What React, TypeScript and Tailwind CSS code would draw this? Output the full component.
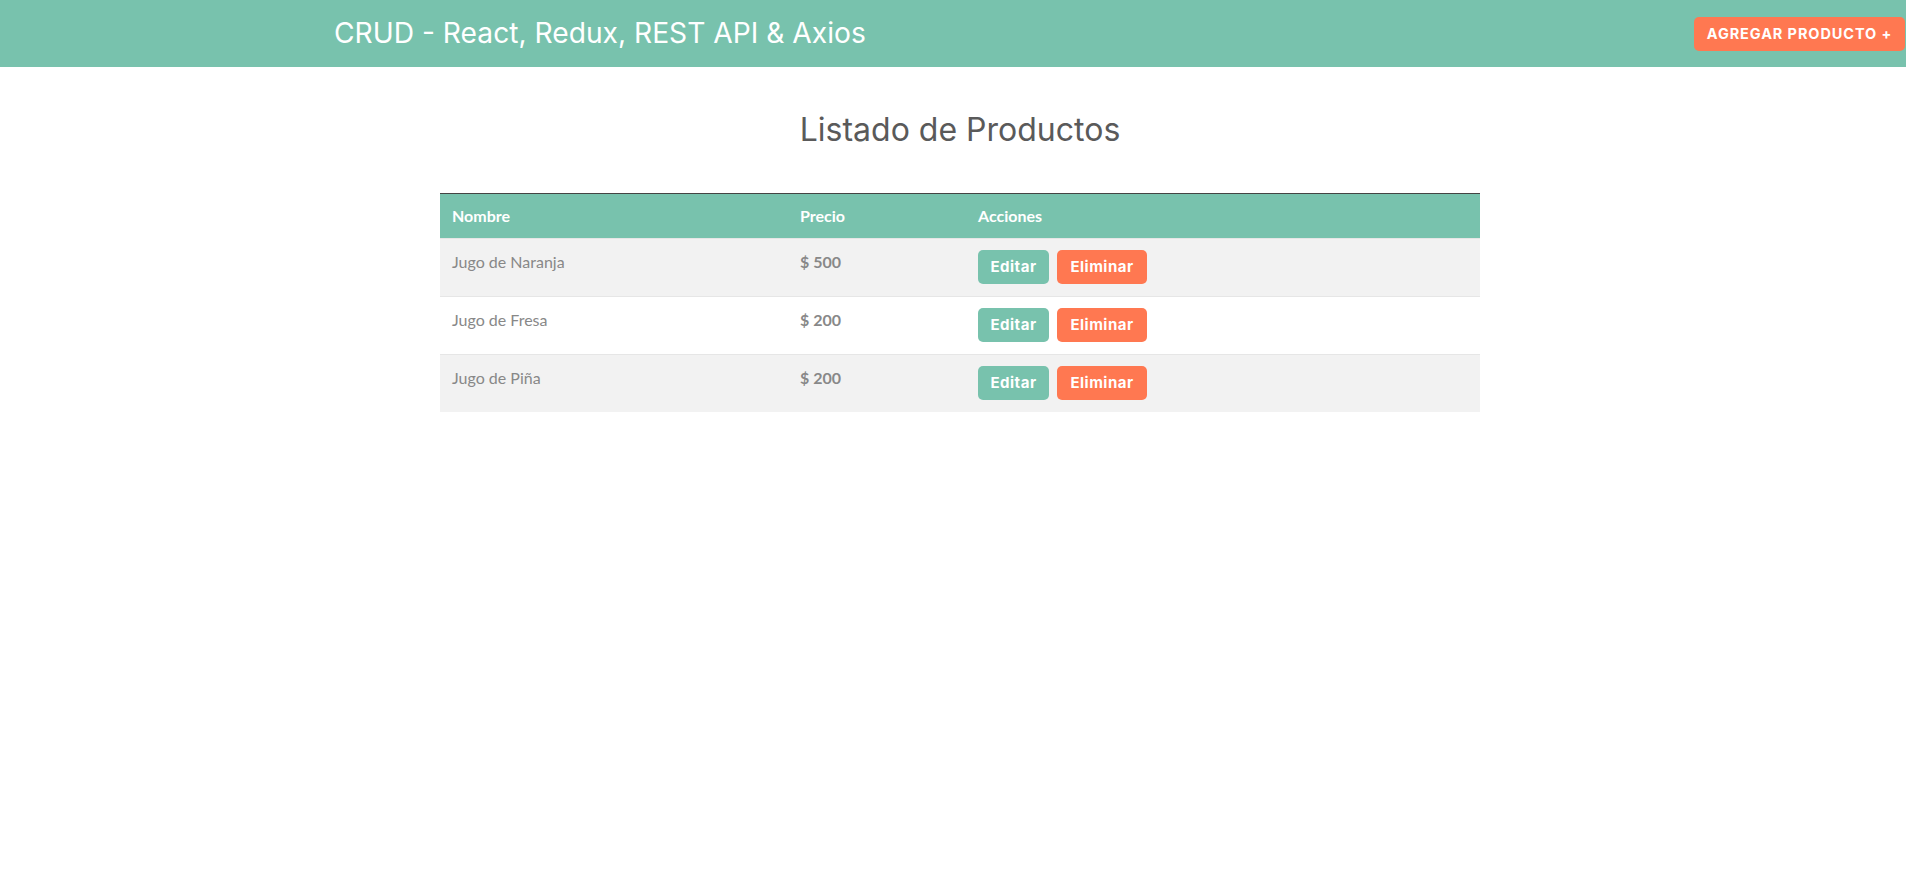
import React from "react";

const productos = [
  { nombre: "Jugo de Naranja", precio: 500 },
  { nombre: "Jugo de Fresa", precio: 200 },
  { nombre: "Jugo de Piña", precio: 200 },
];

export default function App() {
  return (
    <div className="min-h-screen bg-white font-['Lato',sans-serif]">
      <header className="flex h-[67px] items-center justify-between bg-[#78c2ad] pl-[334px] pr-[1px]">
        <h1 className="font-['Inter',sans-serif] text-[28.2px] font-normal leading-none text-white">
          CRUD - React, Redux, REST API &amp; Axios
        </h1>
        <a className="flex h-[34px] w-[211px] items-center justify-center rounded-[5px] bg-[#ff7851] font-['Inter',sans-serif] text-[14.5px] font-bold uppercase tracking-[0.9px] text-white">
          Agregar Producto +
        </a>
      </header>

      <main className="ml-[440px] w-[1040px]">
        <h2 className="pt-[44px] text-center font-['Inter',sans-serif] text-[32px] font-normal leading-[38px] text-[#5a5a5a]">
          Listado de Productos
        </h2>

        <table className="mt-[44px] w-full border-collapse border-t border-[#444]">
          <thead>
            <tr className="h-[45px] bg-[#78c2ad] text-left text-[16px] font-bold text-white">
              <th className="w-[348px] px-3 align-middle">Nombre</th>
              <th className="w-[178px] px-3 align-middle">Precio</th>
              <th className="px-3 align-middle">Acciones</th>
            </tr>
          </thead>
          <tbody className="text-[16px] text-[#888]">
            {productos.map((p, i) => (
              <tr
                key={p.nombre}
                className={`border-t border-[#e6e6e6] ${i % 2 === 0 ? "bg-[#f2f2f2]" : "bg-white"}`}
              >
                <td className="px-3 pt-[11px] pb-[12px] align-top leading-6">{p.nombre}</td>
                <td className="px-3 pt-[11px] pb-[12px] align-top font-bold leading-6">$ {p.precio}</td>
                <td className="px-3 pt-[11px] pb-[12px] align-top">
                  <div className="flex gap-2">
                    <button className="h-[34px] w-[71px] rounded-[5px] bg-[#78c2ad] font-['Inter',sans-serif] text-[15px] font-bold tracking-[0.5px] text-white">
                      Editar
                    </button>
                    <button className="h-[34px] w-[90px] rounded-[5px] bg-[#ff7851] font-['Inter',sans-serif] text-[15px] font-bold tracking-[0.5px] text-white">
                      Eliminar
                    </button>
                  </div>
                </td>
              </tr>
            ))}
          </tbody>
        </table>
      </main>
    </div>
  );
}
